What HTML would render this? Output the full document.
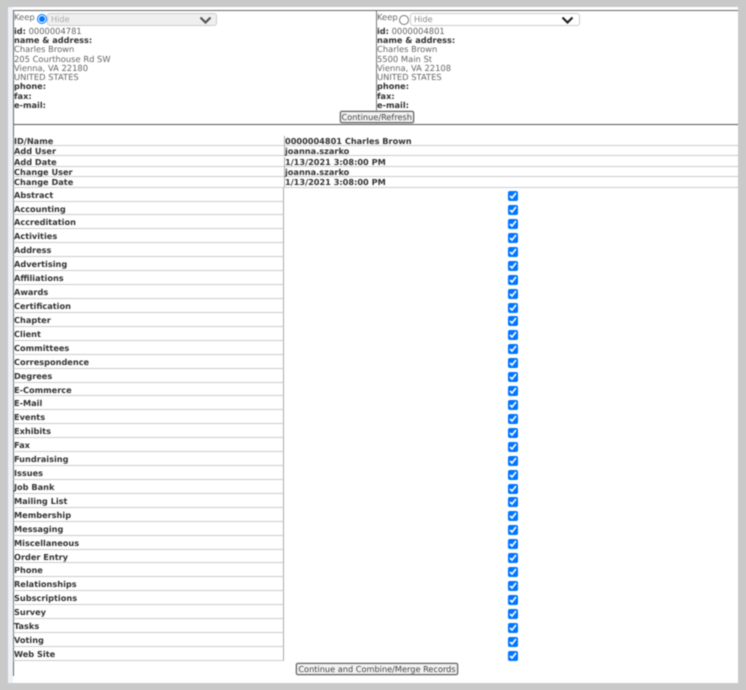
<!DOCTYPE html>
<html><head><meta charset="utf-8"><style>
html,body{margin:0;padding:0;width:746px;height:690px;overflow:hidden;background:#c9c9c9}
#w{position:absolute;left:0;top:0;width:746px;height:690px;filter:blur(.4px);font:8.2px/9.3px "DejaVu Sans",sans-serif;color:#666;text-rendering:geometricPrecision}
.a{position:absolute}
b{color:#333;font-size:8.2px}
.t{position:absolute;white-space:nowrap;font-size:8.35px}
.btn{position:absolute;box-sizing:border-box;border:1px solid #666;border-radius:2px;background:#f2f2f2;height:12px;line-height:10px;text-align:center;color:#444;font-size:8.2px;white-space:nowrap;box-shadow:0 0 0 .5px #aaa}
.sel{position:absolute;box-sizing:border-box;border:1px solid #ccc;border-radius:3px;height:13px;line-height:11px;padding-left:3px;font-size:8.2px;color:#888}
.sel svg{position:absolute;top:2px}
input{margin:0;position:absolute}
.r{position:absolute;left:13px;width:725px;box-sizing:border-box}
.r>div{position:absolute;top:0;bottom:0;font-weight:bold;color:#333;white-space:nowrap;line-height:11.3px;box-sizing:border-box}
.l{left:0;width:272px;border-left:1.5px solid #777;border-right:1px solid #aaa;border-bottom:1.4px solid #ccc;padding-left:0}
.v{left:271px;width:454px;border-left:1px solid #aaa;border-bottom:1.4px solid #ccc}
#rows{position:absolute;left:13px;top:187.6px;width:271px}
#rows div{box-sizing:border-box;height:13.93px;border-left:1.5px solid #777;border-right:1px solid #aaa;border-bottom:1.2px solid #ccc;font-weight:bold;color:#333;line-height:14.6px;white-space:nowrap}
#cb{position:absolute;left:507.5px;top:191.2px;width:10px}
#cb input{position:relative;display:block;width:10px;height:10px;margin:0 0 3.93px 0}
</style></head><body><div id="w">
<div class="a" style="left:8px;top:7px;width:730px;height:676px;background:#fff"></div>
<div class="a" style="left:8px;top:7px;width:5px;height:676px;background:#eef3f9"></div>
<div class="a" style="left:13px;top:10px;width:725px;height:1.4px;background:#666"></div>
<div class="a" style="left:13px;top:124px;width:725px;height:1.4px;background:#555"></div>
<div class="a" style="left:13px;top:10px;width:1.4px;height:666px;background:#666"></div>
<div class="a" style="left:375.6px;top:10px;width:1.4px;height:115px;background:#777"></div>

<div class="t" style="left:14px;top:13px">Keep</div>
<input type="radio" checked style="left:37px;top:14px;width:10px;height:10px">
<div class="sel" style="left:47px;top:12.5px;width:170px;background:#efefef;color:#aaa">Hide<svg width="13" height="8" viewBox="0 0 13 8" style="right:4px"><path d="M1.5 1.5l5 5 5-5" fill="none" stroke="#555" stroke-width="2.2"/></svg></div>
<div class="t" style="left:14px;top:26.7px"><b>id:</b> 0000004781<br><b>name &amp; address:</b><br>Charles Brown<br>205 Courthouse Rd SW<br>Vienna, VA 22180<br>UNITED STATES<br><b>phone:</b><br><b>fax:</b><br><b>e-mail:</b></div>

<div class="t" style="left:377px;top:13px">Keep</div>
<input type="radio" style="left:399px;top:14.5px;width:10px;height:10px">
<div class="sel" style="left:410px;top:12.5px;width:169.5px;background:#fff">Hide<svg width="13" height="8" viewBox="0 0 13 8" style="right:5px"><path d="M1.5 1.5l5 5 5-5" fill="none" stroke="#222" stroke-width="2.2"/></svg></div>
<div class="t" style="left:377px;top:26.7px"><b>id:</b> 0000004801<br><b>name &amp; address:</b><br>Charles Brown<br>5500 Main St<br>Vienna, VA 22108<br>UNITED STATES<br><b>phone:</b><br><b>fax:</b><br><b>e-mail:</b></div>

<div class="btn" style="left:340px;top:111px;width:73.5px">Continue/Refresh</div>

<div class="r" style="top:135.5px;height:10.6px"><div class="l">ID/Name</div><div class="v">0000004801 Charles Brown</div></div>
<div class="r" style="top:146.1px;height:10.4px"><div class="l">Add User</div><div class="v">joanna.szarko</div></div>
<div class="r" style="top:156.5px;height:10.4px"><div class="l">Add Date</div><div class="v">1/13/2021 3:08:00 PM</div></div>
<div class="r" style="top:166.9px;height:10.4px"><div class="l">Change User</div><div class="v">joanna.szarko</div></div>
<div class="r" style="top:177.3px;height:10.4px"><div class="l">Change Date</div><div class="v">1/13/2021 3:08:00 PM</div></div>

<div id="rows">
<div>Abstract</div><div>Accounting</div><div>Accreditation</div><div>Activities</div><div>Address</div><div>Advertising</div><div>Affiliations</div><div>Awards</div><div>Certification</div><div>Chapter</div><div>Client</div><div>Committees</div><div>Correspondence</div><div>Degrees</div><div>E-Commerce</div><div>E-Mail</div><div>Events</div><div>Exhibits</div><div>Fax</div><div>Fundraising</div><div>Issues</div><div>Job Bank</div><div>Mailing List</div><div>Membership</div><div>Messaging</div><div>Miscellaneous</div><div>Order Entry</div><div>Phone</div><div>Relationships</div><div>Subscriptions</div><div>Survey</div><div>Tasks</div><div>Voting</div><div>Web Site</div>
</div>
<div id="cb">
<input type="checkbox" checked><input type="checkbox" checked><input type="checkbox" checked><input type="checkbox" checked><input type="checkbox" checked><input type="checkbox" checked><input type="checkbox" checked><input type="checkbox" checked><input type="checkbox" checked><input type="checkbox" checked><input type="checkbox" checked><input type="checkbox" checked><input type="checkbox" checked><input type="checkbox" checked><input type="checkbox" checked><input type="checkbox" checked><input type="checkbox" checked><input type="checkbox" checked><input type="checkbox" checked><input type="checkbox" checked><input type="checkbox" checked><input type="checkbox" checked><input type="checkbox" checked><input type="checkbox" checked><input type="checkbox" checked><input type="checkbox" checked><input type="checkbox" checked><input type="checkbox" checked><input type="checkbox" checked><input type="checkbox" checked><input type="checkbox" checked><input type="checkbox" checked><input type="checkbox" checked><input type="checkbox" checked>
</div>
<div class="btn" style="left:296px;top:663px;width:162px">Continue and Combine/Merge Records</div>
</div></body></html>
